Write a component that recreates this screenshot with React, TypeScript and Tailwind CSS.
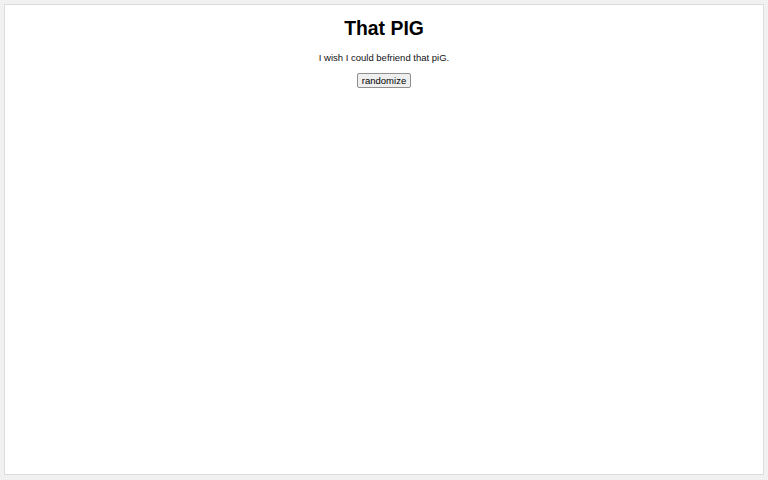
import React from 'react';

export default function App() {
  return (
    <div className="h-[480px] w-[768px] bg-[#f1f1f1] p-[4px] font-['Liberation_Sans',Arial,sans-serif]">
      <div className="flex h-[471px] flex-col items-center border border-[#dcdcdc] bg-white pt-[9px] text-black">
        <h1 className="text-[19.4px] font-bold leading-[28px]">That PIG</h1>
        <p className="mt-[10px] text-[9.5px] leading-[12px] text-[#111]">I wish I could befriend that piG.</p>
        <button className="mt-[9px] rounded-[2px] border border-[#8f8f8f] bg-[#efefef] px-[4px] text-[9.5px] leading-[13px]">
          randomize
        </button>
      </div>
    </div>
  );
}
